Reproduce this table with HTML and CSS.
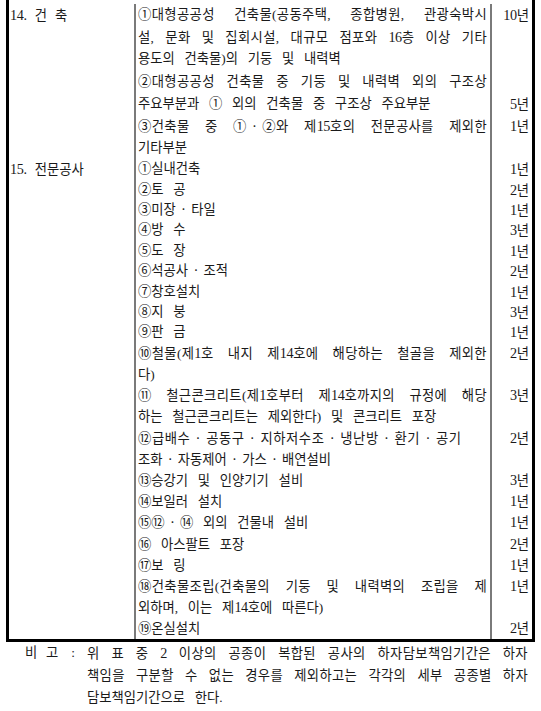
FILE: index.html
```html
<!DOCTYPE html>
<html lang="ko">
<head>
<meta charset="utf-8">
<title>하자담보책임기간</title>
<link rel="stylesheet" href="styles.css">
</head>
<body>
<div class="sheet">
  <div class="table">
    <div class="row r14"><div class="c1"><span class="num">14.</span> 건 축</div><div class="c2 j"><span class="n">①</span>대형공공성 건축물(공동주택, 종합병원, 관광숙박시</div><div class="c3"><span class="num">10</span>년</div></div>
    <div class="row r14"><div class="c1"></div><div class="c2 j">설, 문화 및 집회시설, 대규모 점포와 <span class="num">16</span>층 이상 기타</div><div class="c3"></div></div>
    <div class="row r14"><div class="c1"></div><div class="c2">용도의 건축물)의 기둥 및 내력벽</div><div class="c3"></div></div>
    <div class="row r14"><div class="c1"></div><div class="c2 j"><span class="n">②</span>대형공공성 건축물 중 기둥 및 내력벽 외의 구조상</div><div class="c3"></div></div>
    <div class="row r14"><div class="c1"></div><div class="c2">주요부분과 <span class="n">①</span> 외의 건축물 중 구조상 주요부분</div><div class="c3"><span class="num">5</span>년</div></div>
    <div class="row r14"><div class="c1"></div><div class="c2 j"><span class="n">③</span>건축물 중 <span class="n">①<span class="d">ㆍ</span>②</span>와 제<span class="num">15</span>호의 전문공사를 제외한</div><div class="c3"><span class="num">1</span>년</div></div>
    <div class="row r14"><div class="c1"></div><div class="c2">기타부분</div><div class="c3"></div></div>

    <div class="row ra"><div class="c1"><span class="num">15.</span> 전문공사</div><div class="c2"><span class="n">①</span>실내건축</div><div class="c3"><span class="num">1</span>년</div></div>
    <div class="row ra"><div class="c1"></div><div class="c2"><span class="n">②</span>토 공</div><div class="c3"><span class="num">2</span>년</div></div>
    <div class="row ra"><div class="c1"></div><div class="c2"><span class="n">③</span>미장<span class="d">ㆍ</span>타일</div><div class="c3"><span class="num">1</span>년</div></div>
    <div class="row ra"><div class="c1"></div><div class="c2"><span class="n">④</span>방 수</div><div class="c3"><span class="num">3</span>년</div></div>
    <div class="row ra"><div class="c1"></div><div class="c2"><span class="n">⑤</span>도 장</div><div class="c3"><span class="num">1</span>년</div></div>
    <div class="row ra"><div class="c1"></div><div class="c2"><span class="n">⑥</span>석공사<span class="d">ㆍ</span>조적</div><div class="c3"><span class="num">2</span>년</div></div>
    <div class="row ra"><div class="c1"></div><div class="c2"><span class="n">⑦</span>창호설치</div><div class="c3"><span class="num">1</span>년</div></div>
    <div class="row ra"><div class="c1"></div><div class="c2"><span class="n">⑧</span>지 붕</div><div class="c3"><span class="num">3</span>년</div></div>
    <div class="row ra"><div class="c1"></div><div class="c2"><span class="n">⑨</span>판 금</div><div class="c3"><span class="num">1</span>년</div></div>
    <div class="row rb"><div class="c1"></div><div class="c2 j"><span class="n">⑩</span>철물(제<span class="num">1</span>호 내지 제<span class="num">14</span>호에 해당하는 철골을 제외한</div><div class="c3"><span class="num">2</span>년</div></div>
    <div class="row rb"><div class="c1"></div><div class="c2">다)</div><div class="c3"></div></div>
    <div class="row rb"><div class="c1"></div><div class="c2 j"><span class="n">⑪</span> 철근콘크리트(제<span class="num">1</span>호부터 제<span class="num">14</span>호까지의 규정에 해당</div><div class="c3"><span class="num">3</span>년</div></div>
    <div class="row rb"><div class="c1"></div><div class="c2">하는 철근콘크리트는 제외한다) 및 콘크리트 포장</div><div class="c3"></div></div>
    <div class="row rb"><div class="c1"></div><div class="c2 wide"><span class="n">⑫</span>급배수<span class="d">ㆍ</span>공동구<span class="d">ㆍ</span>지하저수조<span class="d">ㆍ</span>냉난방<span class="d">ㆍ</span>환기<span class="d">ㆍ</span>공기</div><div class="c3"><span class="num">2</span>년</div></div>
    <div class="row rb"><div class="c1"></div><div class="c2">조화<span class="d">ㆍ</span>자동제어<span class="d">ㆍ</span>가스<span class="d">ㆍ</span>배연설비</div><div class="c3"></div></div>
    <div class="row rb"><div class="c1"></div><div class="c2"><span class="n">⑬</span>승강기 및 인양기기 설비</div><div class="c3"><span class="num">3</span>년</div></div>
    <div class="row rb"><div class="c1"></div><div class="c2"><span class="n">⑭</span>보일러 설치</div><div class="c3"><span class="num">1</span>년</div></div>
    <div class="row rb"><div class="c1"></div><div class="c2"><span class="n">⑮⑫<span class="d">ㆍ</span>⑭</span> 외의 건물내 설비</div><div class="c3"><span class="num">1</span>년</div></div>
    <div class="row rb"><div class="c1"></div><div class="c2"><span class="n">⑯</span> 아스팔트 포장</div><div class="c3"><span class="num">2</span>년</div></div>
    <div class="row rb"><div class="c1"></div><div class="c2"><span class="n">⑰</span>보 링</div><div class="c3"><span class="num">1</span>년</div></div>
    <div class="row rb"><div class="c1"></div><div class="c2 j"><span class="n">⑱</span>건축물조립(건축물의 기둥 및 내력벽의 조립을 제</div><div class="c3"><span class="num">1</span>년</div></div>
    <div class="row rb"><div class="c1"></div><div class="c2">외하며, 이는 제<span class="num">14</span>호에 따른다)</div><div class="c3"></div></div>
    <div class="row rb"><div class="c1"></div><div class="c2"><span class="n">⑲</span>온실설치</div><div class="c3"><span class="num">2</span>년</div></div>
  </div>
  <div class="note">
    <div class="note-label">비 고<span class="colon">:</span></div>
    <div class="note-body">
      <div class="nl j">위 표 중 <span class="num">2</span> 이상의 공종이 복합된 공사의 하자담보책임기간은 하자</div>
      <div class="nl j">책임을 구분할 수 없는 경우를 제외하고는 각각의 세부 공종별 하자</div>
      <div class="nl">담보책임기간으로 한다.</div>
    </div>
  </div>
</div>
</body>
</html>
```

FILE: styles.css
```css
html, body {
  margin: 0;
  padding: 0;
  background: #ffffff;
}

body {
  font-family: "Liberation Serif", "Noto Sans CJK KR", serif;
  font-size: 13.33px;
  color: #1a1a1a;
  word-spacing: 6.4px;
}

.sheet {
  width: 541px;
}

.table {
  margin-left: 6px;
  width: 523px;
  padding-top: 4px;
  border-left: 3px solid #000;
  border-right: 3px solid #000;
  border-bottom: 3px solid #000;
}

.row {
  display: grid;
  grid-template-columns: 127px 356px 40px;
  white-space: nowrap;
}

.r14 { height: 22.2px; line-height: 22.2px; }
.ra  { height: 20.4px; line-height: 20.4px; }
.rb  { height: 21.2px; line-height: 21.2px; }

.c1 {
  padding-left: 1px;
  border-right: 2px solid #7a7a7a;
  word-spacing: 4.8px;
}

.c2 {
  padding: 0 3px 0 2px;
  border-right: 2px solid #7a7a7a;
  overflow: hidden;
}

.c3 {
  text-align: right;
  padding-right: 3px;
  word-spacing: 0;
}

.num {
  font-size: 14.2px;
  letter-spacing: -0.4px;
}

.n {
  display: inline-block;
  word-spacing: 0;
}

.d {
  margin: 0 1.5px;
}

.j {
  text-align: justify;
  text-align-last: justify;
  letter-spacing: 0.35px;
}

.wide {
  letter-spacing: 0.55px;
}

.note {
  display: flex;
  padding-left: 25px;
  width: 503px;
}

.note-label {
  flex: 0 0 62px;
  line-height: 22.5px;
  word-spacing: 5.4px;
}

.colon {
  margin-left: 13px;
}

.note-body {
  flex: 1 1 auto;
  min-width: 0;
}

.nl {
  line-height: 22.5px;
  height: 22.5px;
  white-space: nowrap;
}
```
